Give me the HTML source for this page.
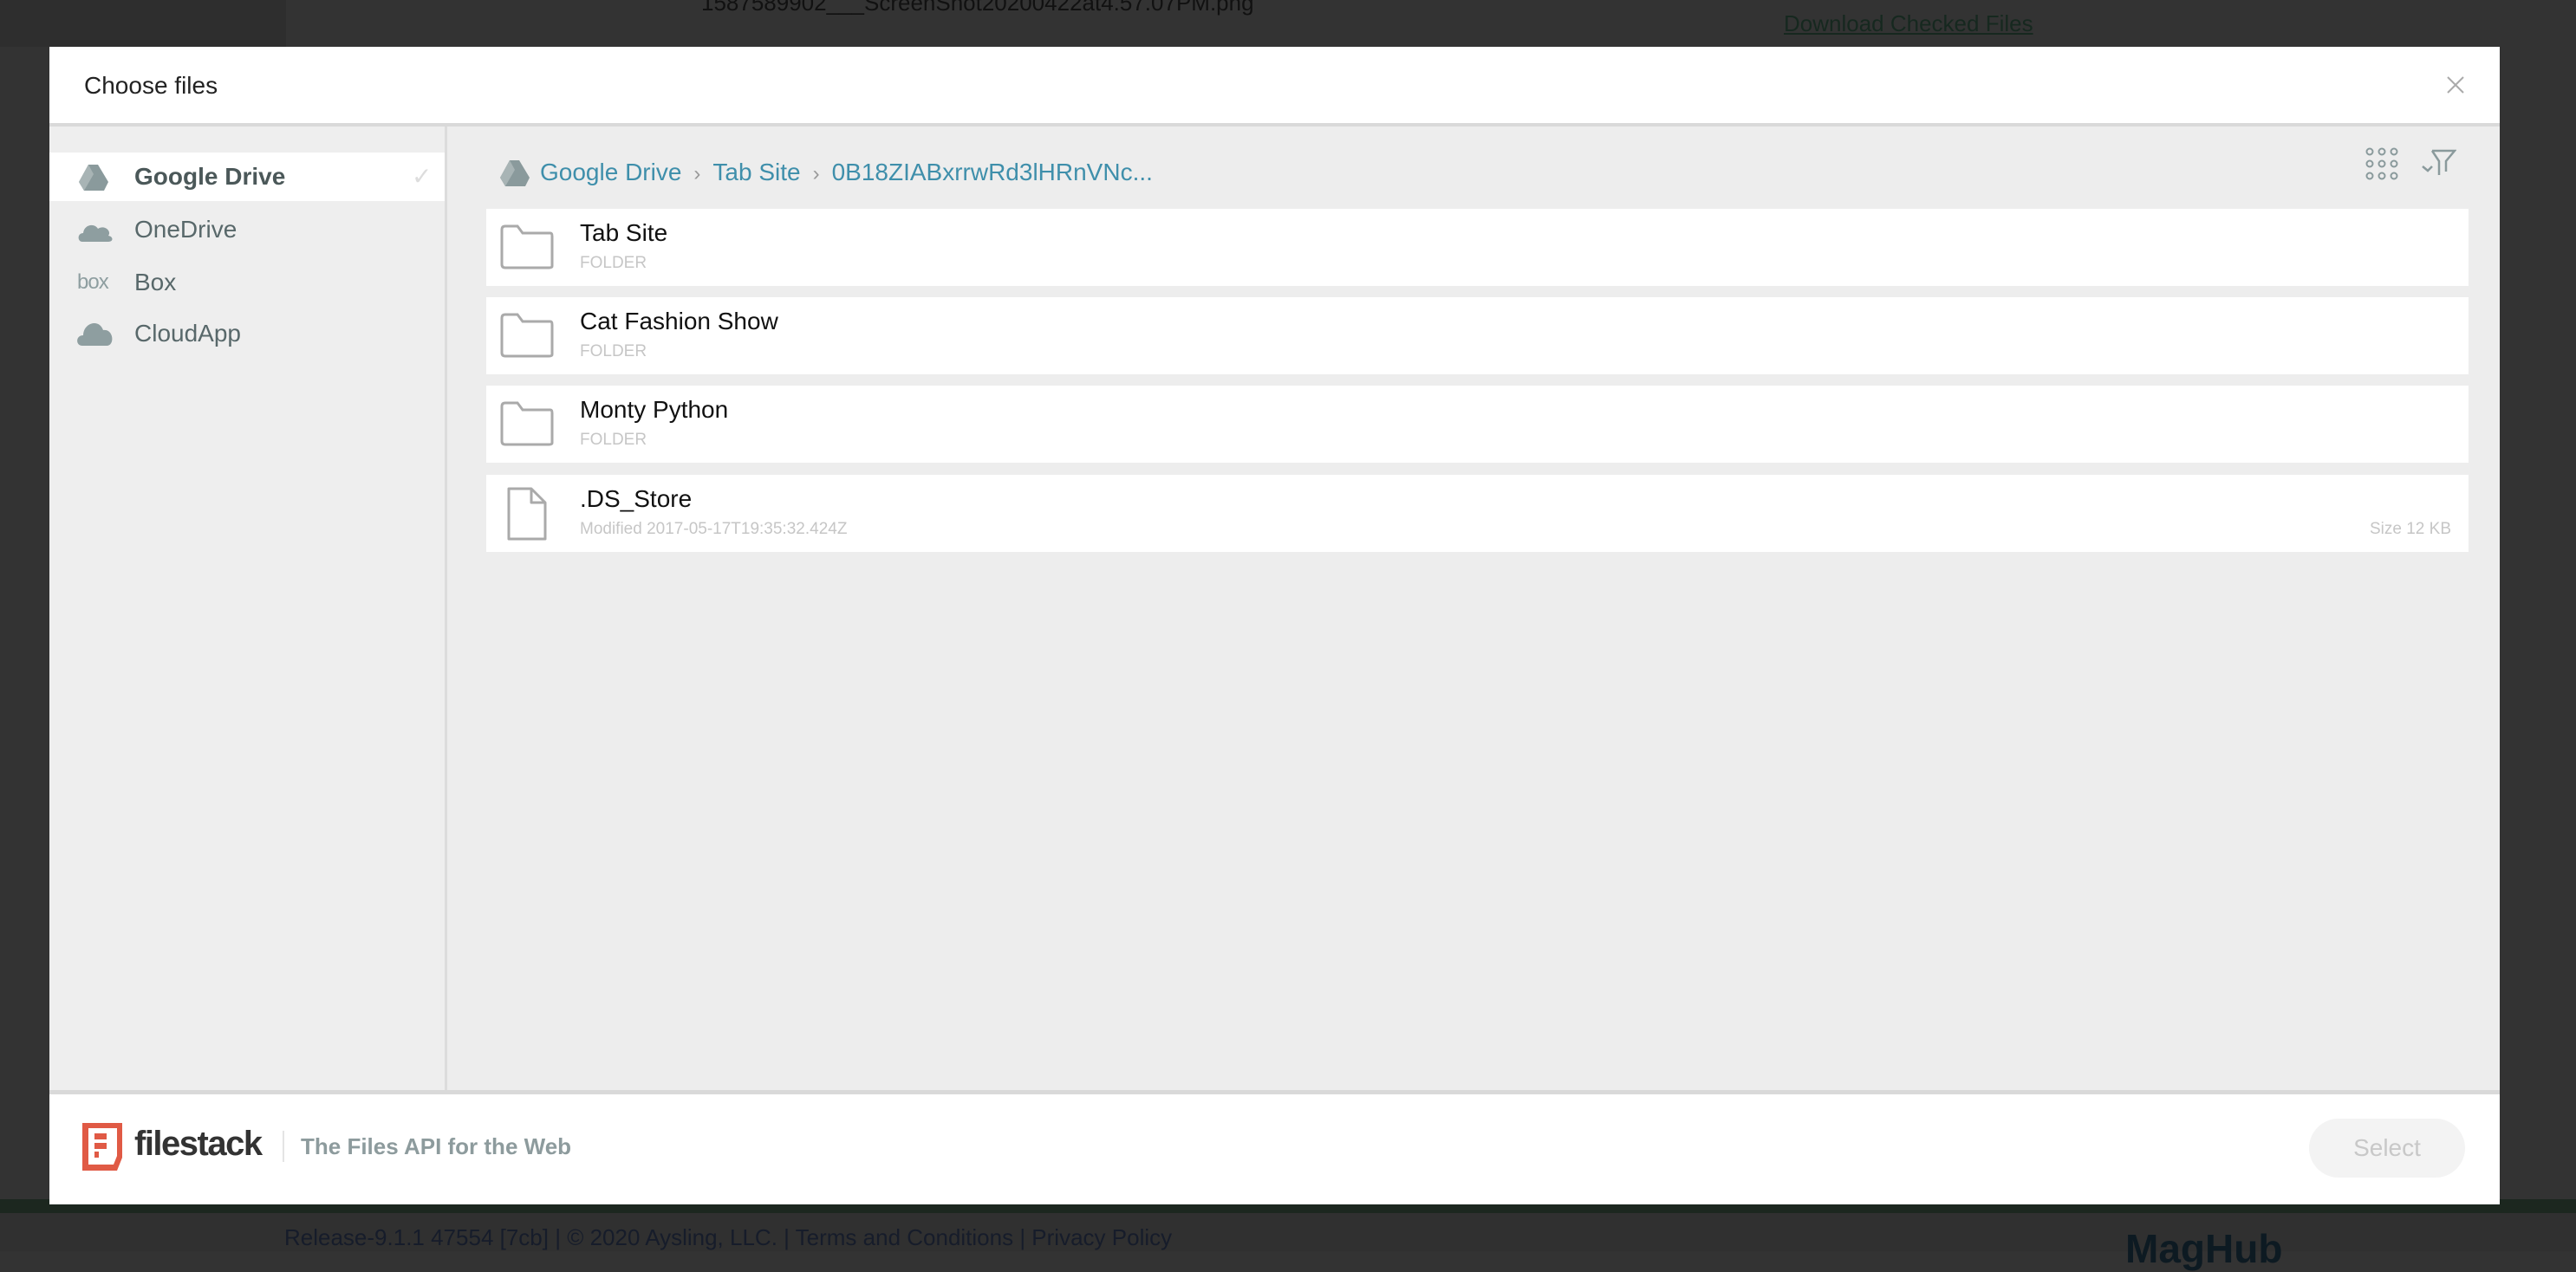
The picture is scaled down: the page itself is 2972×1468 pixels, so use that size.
<!DOCTYPE html>
<html><head><meta charset="utf-8"><style>
*{margin:0;padding:0;box-sizing:border-box}
body{width:2972px;height:1444px;background:#333;position:relative;overflow:hidden;font-family:"Liberation Sans",sans-serif}
.abs{position:absolute}
.modal{left:57px;top:54px;width:2827px;height:1336px;background:#fff}
.hdr{left:0;top:0;width:100%;height:92px;border-bottom:4px solid #d9d9d9}
.side{left:0;top:92px;width:459px;height:1112px;background:#eee;border-right:3px solid #dcdcdc}
.main{left:459px;top:92px;width:2368px;height:1112px;background:#ededed}
.foot{left:0;top:1204px;width:100%;height:132px;background:#fff;border-top:5px solid #d9d9d9}
.si{position:absolute;left:0;width:456px;height:56px;font-size:28px;color:#58686a;line-height:56px}
.si span{position:absolute;left:98px}
.row{position:absolute;left:45px;width:2287px;height:89px;background:#fff}
.row .n{position:absolute;left:108px;top:12px;font-size:28px;color:#111}
.row .s{position:absolute;left:108px;top:52px;font-size:19px;color:#c6c6c6}
.row svg{position:absolute;left:16px;top:18px}
.bc{position:absolute;left:107px;top:37px;font-size:28px;color:#3f8fab;white-space:nowrap}
.sep{color:#999;font-size:24px;margin:0 14px 0 14px}
</style></head><body>
<div class="abs" style="left:330px;top:0;width:2000px;height:54px;background:#333"></div>
<div class="abs" style="left:0;top:0;width:330px;height:54px;background:#2e2e2e"></div>
<div class="abs" style="left:809px;top:-12px;font-size:26px;color:#111">1587589902___ScreenShot20200422at4.57.07PM.png</div>
<div class="abs" style="left:2058px;top:12px;font-size:26px;color:#16281f;text-decoration:underline">Download Checked Files</div>
<div class="abs" style="left:0;top:1384px;width:2972px;height:16px;background:#1c271f"></div>
<div class="abs" style="left:0;top:1400px;width:2972px;height:44px;background:#303030"></div>
<div class="abs" style="left:328px;top:1413px;font-size:26px;color:#161c2a">Release-9.1.1 47554 [7cb] | © 2020 Aysling, LLC. | Terms and Conditions | Privacy Policy</div>
<div class="abs" style="left:2452px;top:1414px;font-size:46px;font-weight:bold;color:#0d1a22">MagHub</div>

<div class="abs modal">
 <div class="abs hdr"><div class="abs" style="left:40px;top:29px;font-size:28px;color:#222">Choose files</div>
  <svg class="abs" style="left:2765px;top:33px" width="22" height="22"><path d="M2 2L20 20M20 2L2 20" stroke="#aaa" stroke-width="2"/></svg></div>
 <div class="abs side">
  <div class="si" style="top:30px;background:#fff;font-weight:bold;color:#4b5859">
   <svg style="position:absolute;left:34px;top:14px" width="34" height="30"><path d="M11 0H22L34 20L29 30H6L0 20Z" fill="#8a9a9c"/><path d="M11 0L17 11L6 30L0 20Z" fill="#a8b4b5"/></svg>
   <span>Google Drive</span><span style="left:418px;font-weight:normal;color:#ddd">✓</span></div>
  <div class="si" style="top:91px"><svg style="position:absolute;left:32px;top:14px" width="42" height="28"><path d="M6 28C0 28 0 18 7 18C8 8 20 6 24 13C32 8 40 16 36 21C42 22 42 28 36 28Z" fill="#8e9ea0"/></svg><span style="font-weight:normal">OneDrive</span></div>
  <div class="si" style="top:152px"><span style="left:32px;font-size:24px;color:#8e9ea0;letter-spacing:-1px">box</span><span>Box</span></div>
  <div class="si" style="top:211px"><svg style="position:absolute;left:32px;top:10px" width="42" height="34"><path d="M6 32C-2 32 -2 20 7 20C7 6 25 0 30 14C42 12 44 32 34 32Z" fill="#8e9ea0"/></svg><span>CloudApp</span></div>
 </div>
 <div class="abs main">
  <svg class="abs" style="left:61px;top:39px" width="34" height="30"><path d="M11 0H22L34 20L29 30H6L0 20Z" fill="#8a9a9c"/><path d="M11 0L17 11L6 30L0 20Z" fill="#a8b4b5"/></svg>
  <div class="bc">Google Drive<span class="sep">›</span>Tab Site<span class="sep">›</span>0B18ZIABxrrwRd3lHRnVNc...</div>
  <svg class="abs" style="left:2213px;top:24px" width="42" height="40" fill="none" stroke="#8a9a9c" stroke-width="2"><circle cx="5" cy="5" r="3.5"/><circle cx="19" cy="5" r="3.5"/><circle cx="33" cy="5" r="3.5"/><circle cx="5" cy="19" r="3.5"/><circle cx="19" cy="19" r="3.5"/><circle cx="33" cy="19" r="3.5"/><circle cx="5" cy="33" r="3.5"/><circle cx="33" cy="33" r="3.5"/><circle cx="19" cy="33" r="3.5"/></svg>
  <svg class="abs" style="left:2278px;top:26px" width="40" height="34" fill="none" stroke="#8a9a9c" stroke-width="2.5"><path d="M1 20L7 25L12 20M12 2H38L28 14V26M12 2L20 14V30"/></svg>
  <div class="row" style="top:95px"><svg width="62" height="52"><path d="M2 6Q2 2 6 2H20L26 10H58Q60 10 60 14V48Q60 50 56 50H6Q2 50 2 46Z" fill="none" stroke="#aaa" stroke-width="3"/></svg><div class="n">Tab Site</div><div class="s">FOLDER</div></div>
  <div class="row" style="top:197px"><svg width="62" height="52"><path d="M2 6Q2 2 6 2H20L26 10H58Q60 10 60 14V48Q60 50 56 50H6Q2 50 2 46Z" fill="none" stroke="#aaa" stroke-width="3"/></svg><div class="n">Cat Fashion Show</div><div class="s">FOLDER</div></div>
  <div class="row" style="top:299px"><svg width="62" height="52"><path d="M2 6Q2 2 6 2H20L26 10H58Q60 10 60 14V48Q60 50 56 50H6Q2 50 2 46Z" fill="none" stroke="#aaa" stroke-width="3"/></svg><div class="n">Monty Python</div><div class="s">FOLDER</div></div>
  <div class="row" style="top:402px"><svg width="50" height="64" style="left:22px;top:14px"><path d="M4 2H30L46 18V60H4Z M30 2V18H46" fill="none" stroke="#aaa" stroke-width="3" stroke-linejoin="round"/></svg><div class="n">.DS_Store</div><div class="s">Modified 2017-05-17T19:35:32.424Z</div><div class="s" style="left:auto;right:20px">Size 12 KB</div></div>
 </div>
 <div class="abs foot">
  <svg class="abs" style="left:38px;top:33px" width="48" height="55"><path d="M0 0H46V40L40 55H0Z" fill="#e05a45"/><path d="M7 6H40V38L36 48H7Z" fill="#fff"/><rect x="14" y="12" width="14" height="7" fill="#e05a45"/><rect x="14" y="23" width="14" height="7" fill="#e05a45"/><rect x="14" y="33" width="5" height="7" fill="#e05a45"/></svg>
  <div class="abs" style="left:98px;top:35px;font-size:40px;font-weight:bold;color:#333;letter-spacing:-1.5px">filestack</div>
  <div class="abs" style="left:269px;top:42px;width:2px;height:36px;background:#e4e4e4"></div>
  <div class="abs" style="left:290px;top:45px;font-size:26px;font-weight:bold;color:#8d9b9d">The Files API for the Web</div>
  <div class="abs" style="left:2607px;top:28px;width:180px;height:68px;border-radius:34px;background:#f3f3f3;color:#c8c8c8;font-size:28px;text-align:center;line-height:68px">Select</div>
 </div>
</div>
</body></html>
